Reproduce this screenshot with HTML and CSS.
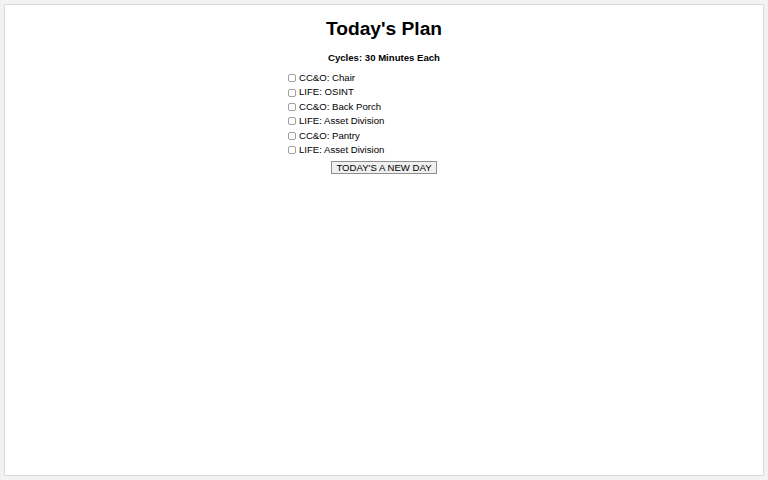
FILE: index.html
```html
<!DOCTYPE html>
<html>
<head>
<meta charset="utf-8">
<title>Today's Plan</title>
<link rel="stylesheet" href="styles.css">
</head>
<body>
<div class="page">
  <h1 class="title">Today's Plan</h1>
  <h4 class="subtitle">Cycles: 30 Minutes Each</h4>
  <div class="plan">
    <ul class="tasks">
      <li><label><input type="checkbox" class="check"> CC&amp;O: Chair</label></li>
      <li><label><input type="checkbox" class="check"> LIFE: OSINT</label></li>
      <li><label><input type="checkbox" class="check"> CC&amp;O: Back Porch</label></li>
      <li><label><input type="checkbox" class="check"> LIFE: Asset Division</label></li>
      <li><label><input type="checkbox" class="check"> CC&amp;O: Pantry</label></li>
      <li><label><input type="checkbox" class="check"> LIFE: Asset Division</label></li>
    </ul>
  </div>
  <div class="actions">
    <button class="reset" type="button">TODAY'S A NEW DAY</button>
  </div>
</div>
</body>
</html>
```

FILE: styles.css
```css
html, body {
  margin: 0;
  height: 100%;
}
body {
  background: #f2f2f2;
  padding: 4px;
  box-sizing: border-box;
  font-family: "Liberation Sans", Arial, sans-serif;
  color: #000;
}
.page {
  background: #fff;
  border: 1px solid #dcdcdc;
  height: 100%;
  box-sizing: border-box;
  text-align: center;
  padding-top: 13px;
}
.title {
  font-size: 19.2px;
  line-height: 22px;
  margin: 0;
  font-weight: bold;
}
.subtitle {
  font-size: 9.6px;
  line-height: 11px;
  margin: 12px 0 0;
  font-weight: bold;
}
.plan {
  width: 192px;
  margin: 8px auto 0;
}
.tasks {
  list-style: none;
  margin: 0;
  padding: 0;
  text-align: left;
  font-size: 9.6px;
}
.tasks li {
  height: 14.4px;
  line-height: 14.4px;
  display: flex;
  align-items: center;
}
.tasks label {
  display: flex;
  align-items: center;
  gap: 2px;
}
.check {
  -webkit-appearance: none;
  appearance: none;
  width: 8px;
  height: 8px;
  margin: 0 1px 0 0;
  border: 1px solid #a0a0a0;
  border-radius: 2px;
  background: #fff;
  box-sizing: border-box;
}
.actions {
  display: flex;
  justify-content: center;
  margin-top: 4px;
}
.reset {
  font-family: "Liberation Sans", Arial, sans-serif;
  font-size: 9.6px;
  line-height: 11px;
  padding: 0 4px;
  height: 13px;
  background: #efefef;
  border: 1px solid #909090;
  border-radius: 0;
  color: #000;
}
```
